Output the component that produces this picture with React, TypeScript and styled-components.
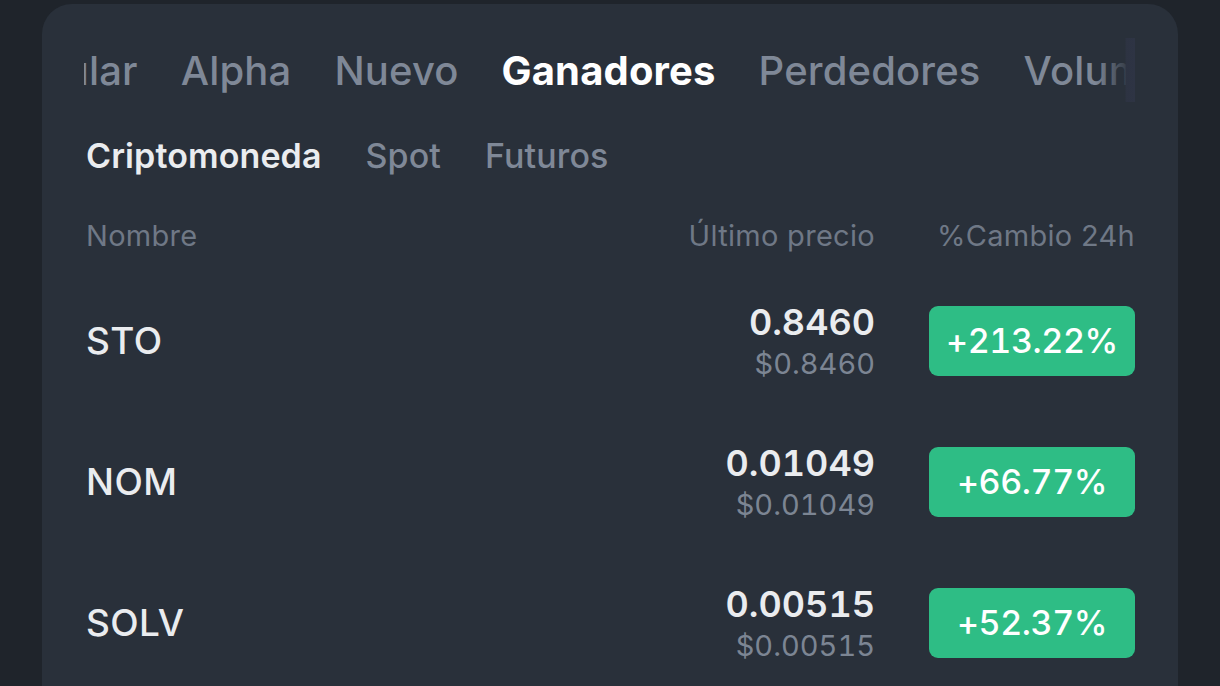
import { useLayoutEffect, useRef } from 'react';
import styled, { createGlobalStyle } from 'styled-components';

const GlobalStyle = createGlobalStyle`
   html, body {
      margin: 0;
      padding: 0;
      background: #1f242b;
      font-family: Inter, "Noto Sans", "Liberation Sans", sans-serif;
      overflow: hidden;
   }
   * {
      box-sizing: border-box;
   }
`;

const Page = styled.div`
   width: 1220px;
   height: 686px;
   padding: 4px 42px 0 42px;
   overflow: hidden;
`;

const Card = styled.div`
   background: #29303a;
   border-radius: 30px 30px 0 0;
   min-height: 720px;
   padding: 32px 43px 0 44px;
`;

const TabStrip = styled.div`
   position: relative;
   margin-left: -2px;
`;

const TabScroller = styled.div`
   display: flex;
   align-items: center;
   gap: 43px;
   height: 68px;
   overflow: hidden;
   white-space: nowrap;
`;

const Tab = styled.span<{ $active?: boolean }>`
   flex: none;
   font-size: 40px;
   font-weight: ${(p) => (p.$active ? 700 : 500)};
   letter-spacing: 0.15px;
   color: ${(p) => (p.$active ? '#ffffff' : '#7f8897')};
`;

const FadeEdge = styled.div`
   position: absolute;
   top: 2px;
   right: 0;
   width: 40px;
   height: 64px;
   pointer-events: none;
   background: linear-gradient(to right, rgba(41, 48, 58, 0) 0%, rgba(41, 48, 58, 0.8) 75%, #2d3342 78%, #2e3444 100%);
`;

const SubTabs = styled.div`
   display: flex;
   align-items: center;
   gap: 44px;
   height: 102px;
`;

const SubTab = styled.span<{ $active?: boolean }>`
   font-size: 34px;
   font-weight: ${(p) => (p.$active ? 600 : 500)};
   letter-spacing: 0.1px;
   color: ${(p) => (p.$active ? '#eaecef' : '#7f8897')};
`;

const HeaderRow = styled.div`
   display: grid;
   grid-template-columns: 1fr auto 260px;
   align-items: center;
   height: 58px;
   margin-bottom: 6px;
   font-size: 29px;
   letter-spacing: 0.3px;
   color: #6f7886;
`;

const HeaderCell = styled.span<{ $right?: boolean }>`
   text-align: ${(p) => (p.$right ? 'right' : 'left')};
`;

const Row = styled.div`
   display: grid;
   grid-template-columns: 1fr auto 260px;
   align-items: center;
   height: 141px;
`;

const Symbol = styled.span`
   font-size: 37px;
   font-weight: 500;
   letter-spacing: 0.4px;
   color: #eaecef;
`;

const PriceBlock = styled.div`
   display: flex;
   flex-direction: column;
   align-items: flex-end;
   font-variant-numeric: tabular-nums;
`;

const Price = styled.span`
   font-size: 36px;
   font-weight: 600;
   line-height: 46px;
   color: #eaecef;
`;

const FiatPrice = styled.span`
   font-size: 29px;
   line-height: 38px;
   color: #7c8593;
`;

const Change = styled.div`
   justify-self: end;
   width: 206px;
   height: 70px;
   border-radius: 9px;
   background: #2ebd85;
   color: #ffffff;
   font-size: 34px;
   font-weight: 500;
   font-variant-numeric: tabular-nums;
   letter-spacing: -0.4px;
   display: flex;
   align-items: center;
   justify-content: center;
`;

const tabs = ['Popular', 'Alpha', 'Nuevo', 'Ganadores', 'Perdedores', 'Volumen 24h'];

const coins = [
   { symbol: 'STO', price: '0.8460', fiat: '$0.8460', change: '+213.22%' },
   { symbol: 'NOM', price: '0.01049', fiat: '$0.01049', change: '+66.77%' },
   { symbol: 'SOLV', price: '0.00515', fiat: '$0.00515', change: '+52.37%' },
];

export default function App(): JSX.Element {
   const scrollerRef = useRef<HTMLDivElement>(null);
   const alphaRef = useRef<HTMLSpanElement>(null);

   useLayoutEffect(() => {
      // the tab bar is scrolled so that "Alpha" sits second, "Popular" half hidden
      if (scrollerRef.current && alphaRef.current) {
         scrollerRef.current.scrollLeft = alphaRef.current.offsetLeft - scrollerRef.current.offsetLeft - 97;
      }
   }, []);

   return (
      <>
         <GlobalStyle />
         <Page>
            <Card>
               <TabStrip>
                  <TabScroller ref={scrollerRef}>
                     {tabs.map((t) => (
                        <Tab key={t} ref={t === 'Alpha' ? alphaRef : undefined} $active={t === 'Ganadores'}>
                           {t}
                        </Tab>
                     ))}
                  </TabScroller>
                  <FadeEdge />
               </TabStrip>
               <SubTabs>
                  <SubTab $active>Criptomoneda</SubTab>
                  <SubTab>Spot</SubTab>
                  <SubTab>Futuros</SubTab>
               </SubTabs>
               <HeaderRow>
                  <HeaderCell>Nombre</HeaderCell>
                  <HeaderCell $right>Último precio</HeaderCell>
                  <HeaderCell $right>%Cambio 24h</HeaderCell>
               </HeaderRow>
               {coins.map((c) => (
                  <Row key={c.symbol}>
                     <Symbol>{c.symbol}</Symbol>
                     <PriceBlock>
                        <Price>{c.price}</Price>
                        <FiatPrice>{c.fiat}</FiatPrice>
                     </PriceBlock>
                     <Change>{c.change}</Change>
                  </Row>
               ))}
            </Card>
         </Page>
      </>
   );
}
